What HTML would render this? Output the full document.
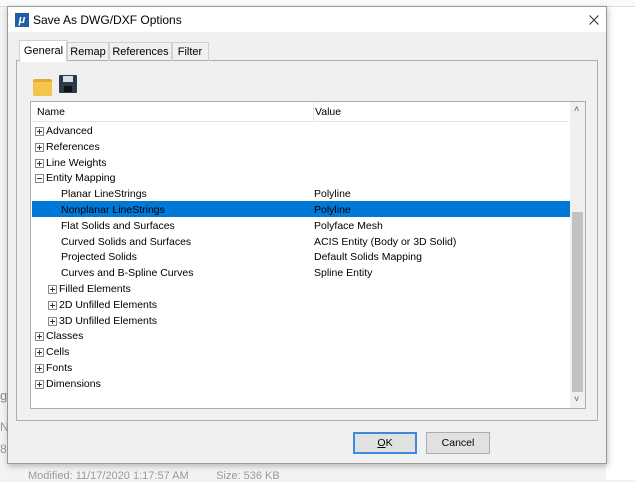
<!DOCTYPE html><html><head><style>
body{margin:0;width:635px;height:480px;background:#f3f3f3;position:relative;overflow:hidden;font-family:"Liberation Sans",sans-serif;font-size:10.5px;color:#000}
.a{position:absolute}
.r{position:absolute;height:16px;line-height:16px;white-space:nowrap}
.b{position:absolute;width:7px;height:7px;border:1px solid #888;background:#fff}
.b:before{content:"";position:absolute;left:1px;top:3px;width:5px;height:1px;background:#333}
.p:after{content:"";position:absolute;left:3px;top:1px;width:1px;height:5px;background:#333}
.t{position:absolute;top:35px;height:18px;border:1px solid #d0d0d0;border-bottom:none;line-height:18px;text-align:center;font-size:11px}
</style></head><body>
<div class="a" style="left:0;top:0;width:635px;height:6px;background:#fafafa;border-bottom:1px solid #ddd"></div>
<div class="a" style="left:0;top:388px;color:#888;font-size:13px">g</div>
<div class="a" style="left:0;top:420px;color:#999;font-size:12px">N</div>
<div class="a" style="left:0;top:442px;color:#999;font-size:12px">8</div>
<div class="a" style="left:28px;top:470px;color:#999;font-size:11px">Modified: 11/17/2020 1:17:57 AM&nbsp;&nbsp;&nbsp;&nbsp;&nbsp;&nbsp;&nbsp;&nbsp;&nbsp;Size: 536 KB</div>
<div class="a" style="left:606px;top:7px;width:29px;height:473px;background:#fff"></div>
<div class="a" style="left:7px;top:6px;width:598px;height:456px;background:#f0f0f0;border:1px solid #9a9a9a;box-shadow:1px 2px 6px rgba(0,0,0,.25)">
<div class="a" style="left:0;top:0;width:598px;height:25px;background:#fff"></div>
<div class="a" style="left:7px;top:6px;width:14px;height:14px;background:#1f5fa8;color:#fff;font-size:11px;line-height:14px;text-align:center;font-style:italic;font-weight:bold">μ</div>
<div class="a" style="left:25px;top:5px;font-size:12px;line-height:16px">Save As DWG/DXF Options</div>
<svg class="a" style="left:581px;top:8px" width="10" height="10"><path d="M0.5 0.5L9.5 9.5M9.5 0.5L0.5 9.5" stroke="#333" stroke-width="1"/></svg>
<div class="a" style="left:8px;top:53px;width:580px;height:359px;border:1px solid #adadad"></div>
<div class="t" style="left:11px;top:33px;width:47px;height:21px;background:#fff;line-height:20px">General</div>
<div class="t" style="left:58px;width:42px">Remap</div>
<div class="t" style="left:100px;width:63px">References</div>
<div class="t" style="left:163px;width:36px">Filter</div>
<div class="a" style="left:25px;top:72px;width:19px;height:14px;background:#f5c44a;border-radius:2px;border-top:3px solid #e6a82e"></div>
<div class="a" style="left:51px;top:68px;width:18px;height:18px;background:#2a3a4a;border-radius:1px"><div class="a" style="left:4px;top:1px;width:10px;height:6px;background:#dde"></div><div class="a" style="left:5px;top:11px;width:8px;height:6px;background:#111"></div></div>
<div class="a" style="left:22px;top:94px;width:554px;height:306px;background:#fff;border:1px solid #adadad">
<div class="a" style="left:1px;top:1px;width:537px;height:18px;border-bottom:1px solid #e5e5e5"></div>
<div class="a" style="left:282px;top:1px;width:1px;height:18px;background:#e5e5e5"></div>
<div class="r" style="left:6px;top:2px">Name</div><div class="r" style="left:284px;top:2px">Value</div>
<div class="a" style="left:539px;top:0;width:15px;height:306px;background:#f0f0f0"><div class="a" style="left:2px;top:110px;width:11px;height:180px;background:#c2c2c2"></div><div class="a" style="left:4px;top:2px;font-size:9px;color:#555">˄</div><div class="a" style="left:4px;top:292px;font-size:9px;color:#555">˅</div></div>
<div class="a" style="left:1px;top:99px;width:538px;height:16px;background:#0078d7"></div>
</div>
</div>
<div class="a" style="left:0;top:1px">
<div class="b p" style="left:35px;top:126px"></div><div class="r" style="left:46px;top:122px">Advanced</div>
<div class="b p" style="left:35px;top:142px"></div><div class="r" style="left:46px;top:138px">References</div>
<div class="b p" style="left:35px;top:158px"></div><div class="r" style="left:46px;top:154px">Line Weights</div>
<div class="b" style="left:35px;top:173px"></div><div class="r" style="left:46px;top:169px">Entity Mapping</div>
<div class="r" style="left:61px;top:185px">Planar LineStrings</div><div class="r" style="left:314px;top:185px">Polyline</div>
<div class="r" style="left:61px;top:201px">Nonplanar LineStrings</div><div class="r" style="left:314px;top:201px">Polyline</div>
<div class="r" style="left:61px;top:217px">Flat Solids and Surfaces</div><div class="r" style="left:314px;top:217px">Polyface Mesh</div>
<div class="r" style="left:61px;top:233px">Curved Solids and Surfaces</div><div class="r" style="left:314px;top:233px">ACIS Entity (Body or 3D Solid)</div>
<div class="r" style="left:61px;top:248px">Projected Solids</div><div class="r" style="left:314px;top:248px">Default Solids Mapping</div>
<div class="r" style="left:61px;top:264px">Curves and B-Spline Curves</div><div class="r" style="left:314px;top:264px">Spline Entity</div>
<div class="b p" style="left:48px;top:284px"></div><div class="r" style="left:59px;top:280px">Filled Elements</div>
<div class="b p" style="left:48px;top:300px"></div><div class="r" style="left:59px;top:296px">2D Unfilled Elements</div>
<div class="b p" style="left:48px;top:316px"></div><div class="r" style="left:59px;top:312px">3D Unfilled Elements</div>
<div class="b p" style="left:35px;top:331px"></div><div class="r" style="left:46px;top:327px">Classes</div>
<div class="b p" style="left:35px;top:347px"></div><div class="r" style="left:46px;top:343px">Cells</div>
<div class="b p" style="left:35px;top:363px"></div><div class="r" style="left:46px;top:359px">Fonts</div>
<div class="b p" style="left:35px;top:379px"></div><div class="r" style="left:46px;top:375px">Dimensions</div>
</div>
<div class="a" style="left:353px;top:432px;width:60px;height:18px;border:2px solid #3c8ad8;background:#e1e1e1;text-align:center;line-height:18px"><u>O</u>K</div>
<div class="a" style="left:426px;top:432px;width:62px;height:20px;border:1px solid #adadad;background:#e1e1e1;text-align:center;line-height:20px">Cancel</div>
</body></html>
